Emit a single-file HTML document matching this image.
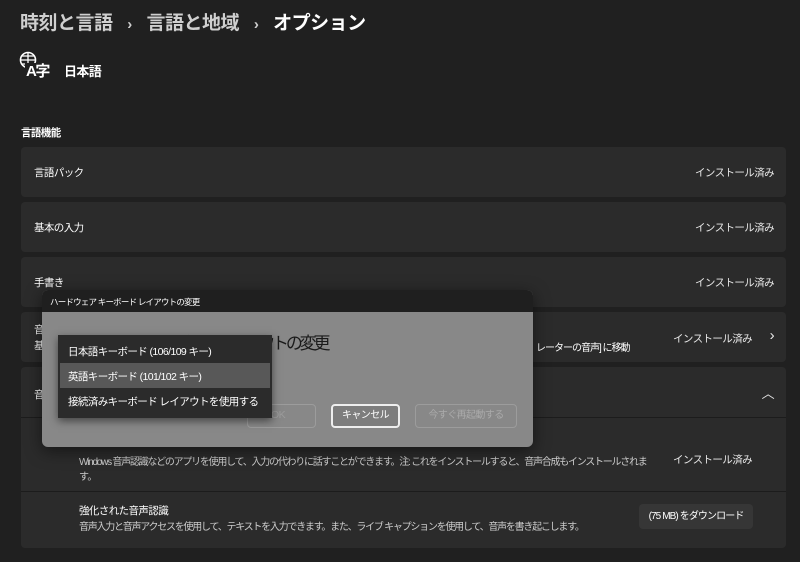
<!DOCTYPE html><html><head><meta charset="utf-8"><style>
*{margin:0;padding:0;box-sizing:border-box}
body{width:800px;height:562px;background:#202020;font-family:"Liberation Sans","Noto Sans CJK JP",sans-serif;color:#fff;position:relative;overflow:hidden;font-size:10.5px;letter-spacing:-0.6px}
.a{position:absolute;white-space:nowrap}
.card{position:absolute;left:21px;width:765px;background:#2b2b2b;border-radius:4px}
.r{position:absolute;right:12px;font-size:10.5px;color:#e8e8e8}
</style></head><body>
<div class="a" style="left:20px;top:8px;font-size:19px;font-weight:bold;color:#cfcfcf;letter-spacing:-0.5px">時刻と言語 <span style="font-size:15px;margin:0 10px">›</span> 言語と地域 <span style="font-size:15px;margin:0 10px">›</span> <span style="color:#fff">オプション</span></div>
<svg class="a" style="left:19px;top:51px" width="22" height="22" viewBox="0 0 22 22"><circle cx="9" cy="9" r="7.5" fill="none" stroke="#fff" stroke-width="1.6"/><path d="M1.5 9h15M9 1.5v15M3 5h12M3 13h12" stroke="#fff" stroke-width="1.3" fill="none"/></svg>
<div class="a" style="left:25px;top:63px;font-size:15px;font-weight:bold;background:#202020;letter-spacing:-1.5px;padding-left:1px;line-height:17px">A字</div>
<div class="a" style="left:64px;top:61px;font-size:13px;font-weight:bold">日本語</div>
<div class="a" style="left:21px;top:125px;font-size:10.5px;font-weight:bold">言語機能</div>
<div class="card" style="top:147px;height:50px"><div class="a" style="left:13px;top:18px">言語パック</div><div class="r" style="top:18px">インストール済み</div></div>
<div class="card" style="top:202px;height:50px"><div class="a" style="left:13px;top:18px">基本の入力</div><div class="r" style="top:18px">インストール済み</div></div>
<div class="card" style="top:257px;height:50px"><div class="a" style="left:13px;top:18px">手書き</div><div class="r" style="top:18px">インストール済み</div></div>
<div class="card" style="top:312px;height:50px"><div class="a" style="left:13px;top:10px">音</div><div class="a" style="left:13px;top:26px">基</div><div class="a" style="left:515px;top:27px;font-size:10px;letter-spacing:-1px">レーターの音声] に移動</div><div class="r" style="top:19px;right:34px">インストール済み</div><div class="r" style="top:15px;font-size:15px">›</div></div>
<div class="card" style="top:367px;height:181px"><div class="a" style="left:13px;top:20px">音</div><div class="r" style="top:16px;font-size:13px">︿</div>
<div style="position:absolute;left:0;right:0;top:50px;height:1px;background:#1c1c1c"></div>
<div class="a" style="left:58px;top:86px;font-size:10px;color:#ccc;letter-spacing:-1.25px">Windows 音声認識などのアプリを使用して、入力の代わりに話すことができます。注: これをインストールすると、音声合成もインストールされま</div>
<div class="a" style="left:58px;top:101px;font-size:10px;color:#ccc">す。</div>
<div class="r" style="top:85px;right:34px">インストール済み</div>
<div style="position:absolute;left:0;right:0;top:124px;height:1px;background:#1c1c1c"></div>
<div class="a" style="left:58px;top:136px">強化された音声認識</div>
<div class="a" style="left:58px;top:151px;font-size:10px;color:#ccc;letter-spacing:-1.25px">音声入力と音声アクセスを使用して、テキストを入力できます。また、ライブ キャプションを使用して、音声を書き起こします。</div>
<div class="a" style="left:618px;top:137px;width:114px;height:25px;background:#363636;border-radius:4px;text-align:center;line-height:25px;font-size:10px;letter-spacing:-0.9px">(75 MB) をダウンロード</div>
</div>
<div class="a" style="left:42px;top:290px;width:491px;height:157px;background:#888;border-radius:6px;overflow:hidden;box-shadow:0 4px 16px rgba(0,0,0,.5)">
<div style="height:22px;background:#1f1f1f;font-size:8.5px;padding:6px 8px;letter-spacing:-0.8px">ハードウェア キーボード レイアウトの変更</div>
<div class="a" style="left:20px;top:39px;font-size:17px;color:#1a1a1a;letter-spacing:-3.2px">ハードウェア キーボード レイアウトの変更</div>
<div class="a" style="left:205px;top:114px;width:69px;height:24px;border:1px solid #9c9c9c;border-radius:4px;color:#9c9c9c;text-align:right;padding:4px 30px 0 0">OK</div>
<div class="a" style="left:289px;top:114px;width:69px;height:24px;border:2px solid #eee;border-radius:4px;background:#7d7d7d;text-align:center;line-height:20px;font-size:10px">キャンセル</div>
<div class="a" style="left:373px;top:114px;width:102px;height:24px;border:1px solid #9c9c9c;border-radius:4px;color:#aaa;text-align:center;line-height:22px;font-size:10px">今すぐ再起動する</div>
</div>
<div class="a" style="left:58px;top:335px;width:214px;height:83px;background:#2b2b2b;box-shadow:0 3px 8px rgba(0,0,0,.5)">
<div class="a" style="left:10px;top:9px">日本語キーボード (106/109 キー)</div>
<div class="a" style="left:2px;top:28px;width:210px;height:25px;background:#585858"></div>
<div class="a" style="left:10px;top:34px">英語キーボード (101/102 キー)</div>
<div class="a" style="left:10px;top:59px">接続済みキーボード レイアウトを使用する</div>
</div>
</body></html>
